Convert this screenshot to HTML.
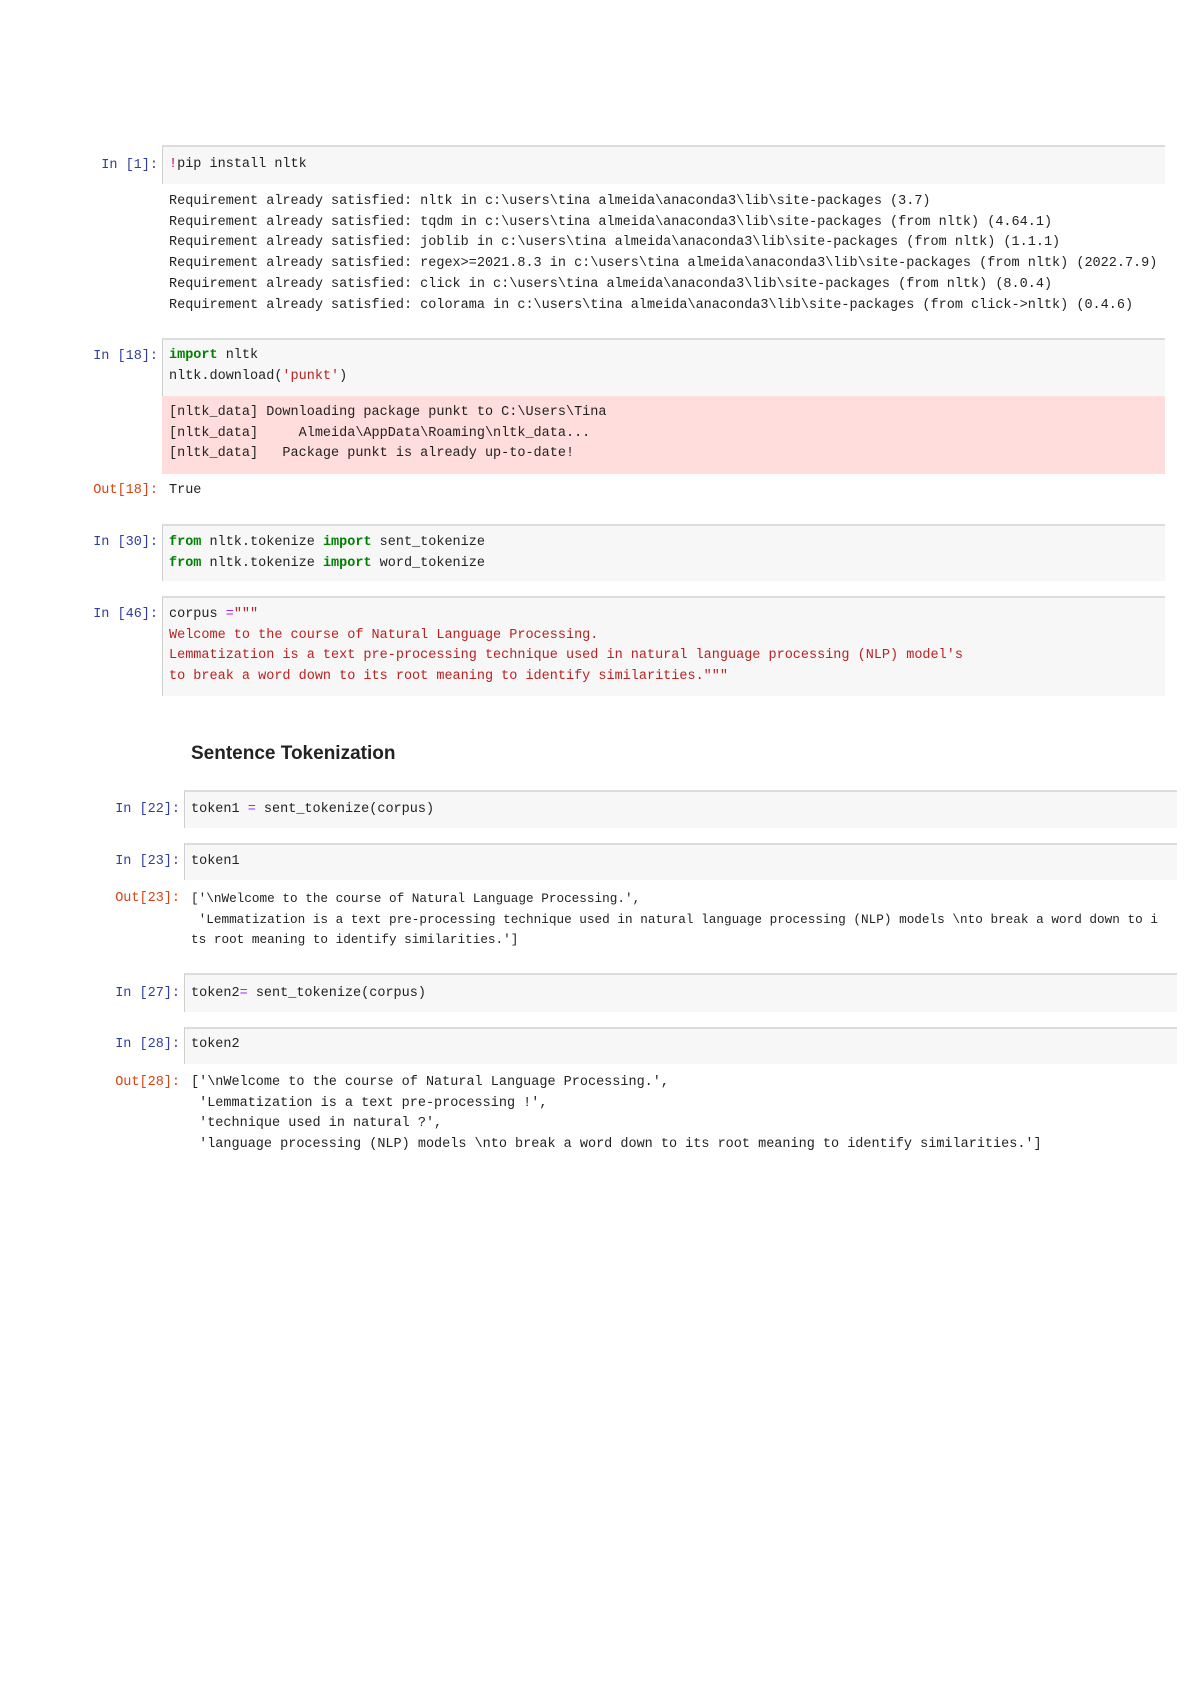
<!DOCTYPE html>
<html><head><meta charset="utf-8"><style>
body{margin:0;width:1200px;height:1696px;background:#fff;position:relative;overflow:hidden;font-family:"Liberation Mono",monospace;font-size:13.5px;color:#222}
.b{position:absolute;background:#f7f7f7;border-top:2px solid #dcdcdc;border-left:1px solid #cfcfcf}
.r{position:absolute;background:#fdd}
.t{position:absolute;white-space:pre;line-height:20.7px}
.p{position:absolute;white-space:pre;color:#303f9f;text-align:right;line-height:20px}
.o{color:#d84315}
.k{color:#008000;font-weight:bold}
.s{color:#ba2121}
h{position:absolute;font-family:"Liberation Sans",sans-serif;font-weight:bold;font-size:19px;left:191px;top:743px}
</style></head><body>
<div class="b" style="left:162px;top:145px;width:1002px;height:37px"></div>
<div class="p" style="left:60px;top:156px;width:98px">In [1]:</div>
<div class="t" style="left:169px;top:155px"><span style="color:#b07">!</span>pip install nltk</div>
<div class="t" style="left:169px;top:192px">Requirement already satisfied: nltk in c:\users\tina almeida\anaconda3\lib\site-packages (3.7)
Requirement already satisfied: tqdm in c:\users\tina almeida\anaconda3\lib\site-packages (from nltk) (4.64.1)
Requirement already satisfied: joblib in c:\users\tina almeida\anaconda3\lib\site-packages (from nltk) (1.1.1)
Requirement already satisfied: regex>=2021.8.3 in c:\users\tina almeida\anaconda3\lib\site-packages (from nltk) (2022.7.9)
Requirement already satisfied: click in c:\users\tina almeida\anaconda3\lib\site-packages (from nltk) (8.0.4)
Requirement already satisfied: colorama in c:\users\tina almeida\anaconda3\lib\site-packages (from click->nltk) (0.4.6)</div>

<div class="b" style="left:162px;top:338px;width:1002px;height:56px"></div>
<div class="p" style="left:60px;top:347px;width:98px">In [18]:</div>
<div class="t" style="left:169px;top:346px"><span class="k">import</span> nltk
nltk.download(<span class="s">'punkt'</span>)</div>
<div class="r" style="left:162px;top:396px;width:1003px;height:78px"></div>
<div class="t" style="left:169px;top:403px">[nltk_data] Downloading package punkt to C:\Users\Tina
[nltk_data]     Almeida\AppData\Roaming\nltk_data...
[nltk_data]   Package punkt is already up-to-date!</div>
<div class="p o" style="left:60px;top:481px;width:98px">Out[18]:</div>
<div class="t" style="left:169px;top:481px">True</div>

<div class="b" style="left:162px;top:524px;width:1002px;height:55px"></div>
<div class="p" style="left:60px;top:533px;width:98px">In [30]:</div>
<div class="t" style="left:169px;top:533px"><span class="k">from</span> nltk.tokenize <span class="k">import</span> sent_tokenize
<span class="k">from</span> nltk.tokenize <span class="k">import</span> word_tokenize</div>

<div class="b" style="left:162px;top:596px;width:1002px;height:98px"></div>
<div class="p" style="left:60px;top:605px;width:98px">In [46]:</div>
<div class="t" style="left:169px;top:605px">corpus <span style="color:#a2f">=</span><span class="s">"""
Welcome to the course of Natural Language Processing.
Lemmatization is a text pre-processing technique used in natural language processing (NLP) model's
to break a word down to its root meaning to identify similarities."""</span></div>

<h>Sentence Tokenization</h>

<div class="b" style="left:184px;top:790px;width:992px;height:36px"></div>
<div class="p" style="left:80px;top:800px;width:100px">In [22]:</div>
<div class="t" style="left:191px;top:800px">token1 <span style="color:#a2f">=</span> sent_tokenize(corpus)</div>

<div class="b" style="left:184px;top:843px;width:992px;height:35px"></div>
<div class="p" style="left:80px;top:852px;width:100px">In [23]:</div>
<div class="t" style="left:191px;top:852px">token1</div>
<div class="p o" style="left:80px;top:889px;width:100px">Out[23]:</div>
<div class="t" style="left:191px;top:889px;font-size:12.7px">['\nWelcome to the course of Natural Language Processing.',
 'Lemmatization is a text pre-processing technique used in natural language processing (NLP) models \nto break a word down to i
ts root meaning to identify similarities.']</div>

<div class="b" style="left:184px;top:973px;width:992px;height:37px"></div>
<div class="p" style="left:80px;top:984px;width:100px">In [27]:</div>
<div class="t" style="left:191px;top:984px">token2<span style="color:#a2f">=</span> sent_tokenize(corpus)</div>

<div class="b" style="left:184px;top:1027px;width:992px;height:35px"></div>
<div class="p" style="left:80px;top:1035px;width:100px">In [28]:</div>
<div class="t" style="left:191px;top:1035px">token2</div>
<div class="p o" style="left:80px;top:1073px;width:100px">Out[28]:</div>
<div class="t" style="left:191px;top:1073px">['\nWelcome to the course of Natural Language Processing.',
 'Lemmatization is a text pre-processing !',
 'technique used in natural ?',
 'language processing (NLP) models \nto break a word down to its root meaning to identify similarities.']</div>
</body></html>
